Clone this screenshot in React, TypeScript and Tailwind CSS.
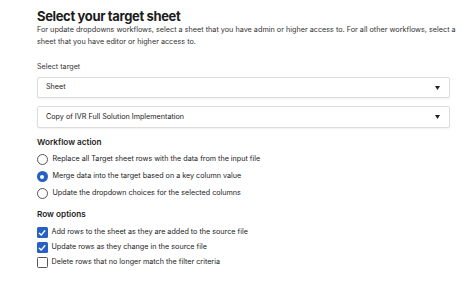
import React from 'react';

const actions = [
    { label: 'Replace all Target sheet rows with the data from the input file', checked: false },
    { label: 'Merge data into the target based on a key column value', checked: true },
    { label: 'Update the dropdown choices for the selected columns', checked: false },
];

const rowOptions = [
    { label: 'Add rows to the sheet as they are added to the source file', checked: true },
    { label: 'Update rows as they change in the source file', checked: true },
    { label: 'Delete rows that no longer match the filter criteria', checked: false },
];

function SelectBox({ value, tall }: { value: string; tall?: boolean }) {
    return (
        <div
            className={`w-[413px] ${tall ? 'h-[22px]' : 'h-[21px]'} flex items-center justify-between pl-[8px] pr-[9px] border border-[#dcdcdc] rounded-[2px] bg-white shadow-[0_1px_2px_rgba(0,0,0,0.06)]`}
        >
            <span className="text-[7.2px] text-[#222]">{value}</span>
            <svg width="5" height="4" viewBox="0 0 5 4">
                <path d="M0 0 H5 L2.5 4 Z" fill="#222" />
            </svg>
        </div>
    );
}

function Radio({ checked }: { checked: boolean }) {
    return checked ? (
        <span className="w-[10.5px] h-[10.5px] rounded-full bg-[#2660c4] flex items-center justify-center">
            <span className="w-[4px] h-[4px] rounded-full bg-white" />
        </span>
    ) : (
        <span className="w-[10.5px] h-[10.5px] rounded-full border border-[#555] bg-white" />
    );
}

function Checkbox({ checked }: { checked: boolean }) {
    return checked ? (
        <span className="w-[10.5px] h-[10.5px] rounded-[1.5px] bg-[#2660c4] flex items-center justify-center">
            <svg width="8" height="8" viewBox="0 0 8 8">
                <path d="M1.3 4.2 L3.2 6.1 L6.8 1.8" stroke="#fff" strokeWidth="1.4" fill="none" strokeLinecap="round" strokeLinejoin="round" />
            </svg>
        </span>
    ) : (
        <span className="w-[10.5px] h-[10.5px] rounded-[1.5px] border border-[#555] bg-white" />
    );
}

export default function App() {
    return (
        <div className="w-[474px] h-[283px] bg-white pl-[37px] pt-[8px] font-['Inter',sans-serif] text-[#1c1c1c] overflow-hidden">
            <h1 className="text-[13px] leading-[16px] font-bold tracking-[-0.35px]">Select your target sheet</h1>
            <p className="w-[425px] text-[7.25px] leading-[12px] text-[#333]">
                For update dropdowns workflows, select a sheet that you have admin or higher access to. For all other workflows, select a sheet that you have editor or higher access to.
            </p>

            <div className="mt-[13px] text-[7.2px] leading-[12px] text-[#333]">Select target</div>
            <div className="mt-[4px] flex flex-col gap-[8px]">
                <SelectBox value="Sheet" />
                <SelectBox value="Copy of IVR Full Solution Implementation" tall />
            </div>

            <div className="mt-[8px] text-[8.2px] leading-[12px] font-semibold">Workflow action</div>
            <div className="mt-[3px] flex flex-col">
                {actions.map(a => (
                    <label key={a.label} className="h-[17px] flex items-center gap-[5px] text-[7.2px] text-[#222]">
                        <Radio checked={a.checked} />
                        <span>{a.label}</span>
                    </label>
                ))}
            </div>

            <div className="mt-[6px] text-[8.2px] leading-[12px] font-semibold">Row options</div>
            <div className="mt-[5px] flex flex-col">
                {rowOptions.map(o => (
                    <label key={o.label} className="h-[15px] flex items-center gap-[4px] text-[7.2px] text-[#222]">
                        <Checkbox checked={o.checked} />
                        <span>{o.label}</span>
                    </label>
                ))}
            </div>
        </div>
    );
}
